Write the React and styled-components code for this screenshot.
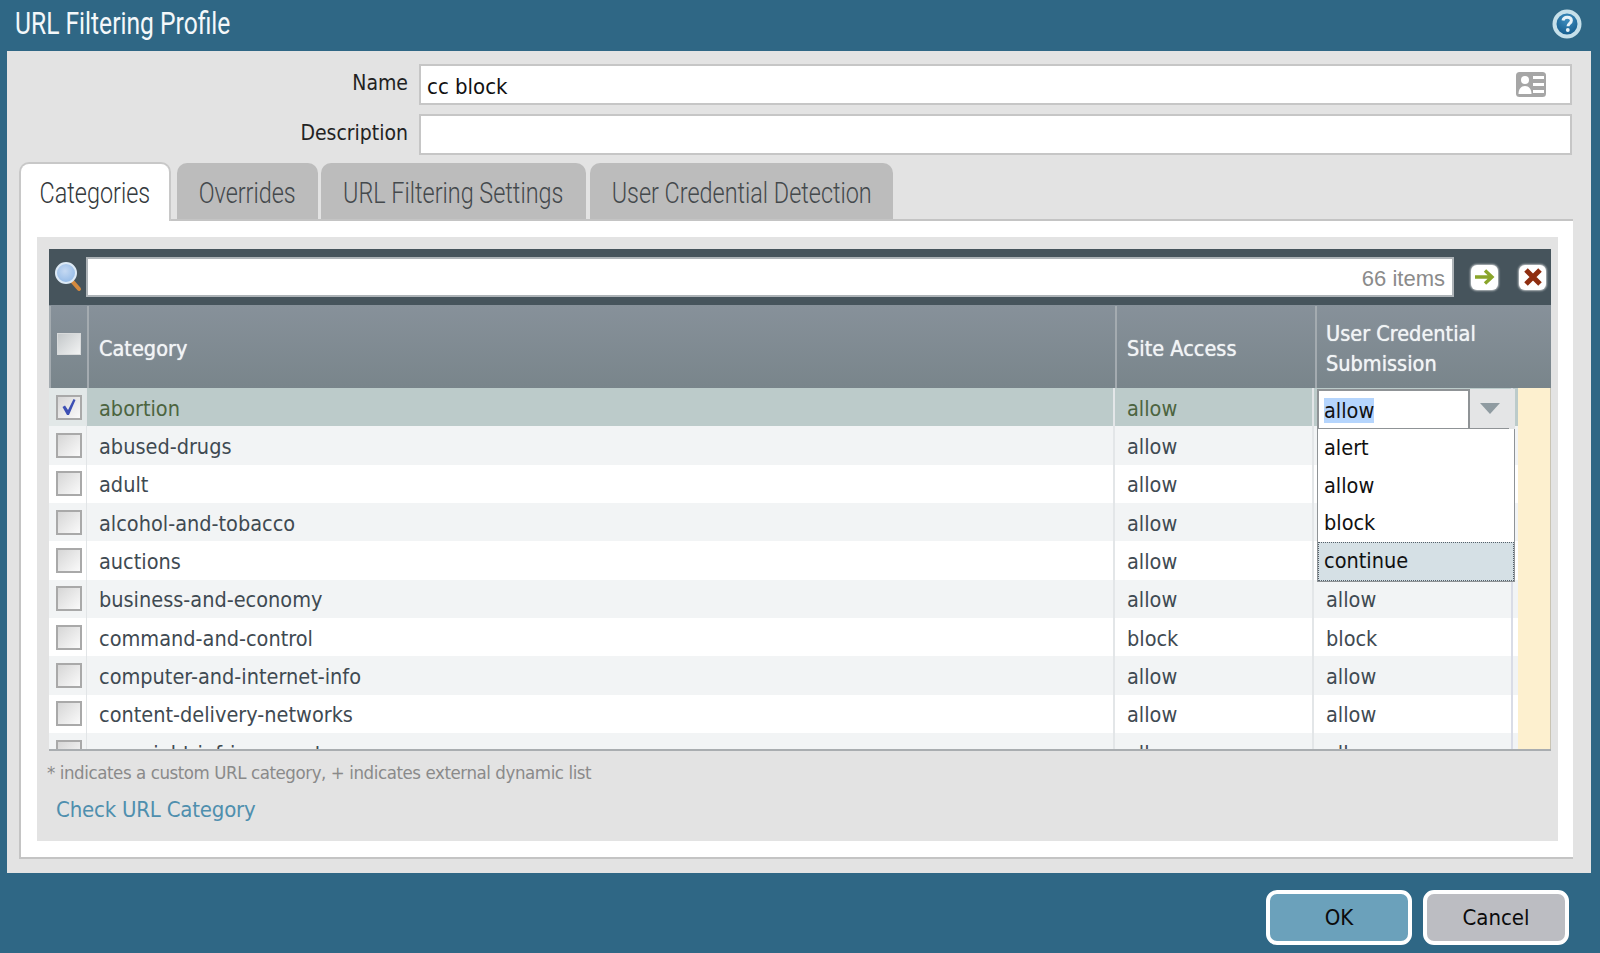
import React from "react";
import styled, { createGlobalStyle } from "styled-components";

const rows = [
  ["abortion", "allow", "allow"],
  ["abused-drugs", "allow", "allow"],
  ["adult", "allow", "allow"],
  ["alcohol-and-tobacco", "allow", "allow"],
  ["auctions", "allow", "allow"],
  ["business-and-economy", "allow", "allow"],
  ["command-and-control", "block", "block"],
  ["computer-and-internet-info", "allow", "allow"],
  ["content-delivery-networks", "allow", "allow"],
  ["copyright-infringement", "allow", "allow"],
];

const tabs = [
  { label: "Categories", width: 152, gap: 6 },
  { label: "Overrides", width: 141, gap: 3 },
  { label: "URL Filtering Settings", width: 265, gap: 4 },
  { label: "User Credential Detection", width: 303, gap: 0 },
];

function HelpIcon() {
  return (
    <svg width="32" height="32" viewBox="0 0 32 32">
      <defs>
        <radialGradient id="helpFill" cx="50%" cy="30%" r="70%">
          <stop offset="0%" stopColor="#3f8fc0" />
          <stop offset="100%" stopColor="#12598a" />
        </radialGradient>
      </defs>
      <circle cx="16" cy="16" r="12.500" fill="url(#helpFill)" stroke="#c6e0ea" strokeWidth="4" />
      <path d="M12 12.500c.4-2.300 2-3.300 4.200-3.300 2.500 0 4.200 1.300 4.200 3.300 0 2.800-3.400 3-3.400 5.700" fill="none" stroke="#e8f3f8" strokeWidth="3" />
      <circle cx="16.800" cy="22" r="1.900" fill="#e8f3f8" />
    </svg>
  );
}

function CardIcon() {
  return (
    <svg width="32" height="27" viewBox="0 0 32 27">
      <rect x="1" y="1" width="30" height="25" rx="3.500" fill="#a6a6a6" />
      <circle cx="10" cy="9" r="4" fill="#fff" />
      <path d="M3.500 23c0-5 2.500-8 6.500-8s6.500 3 6.500 8z" fill="#fff" />
      <path d="M18 5h11v3H18zM18 12h11v3H18zM18 19h11v3H18z" fill="#fff" />
    </svg>
  );
}

function SearchIcon() {
  return (
    <svg width="30" height="32" viewBox="0 0 30 32">
      <defs>
        <radialGradient id="lensFill" cx="45%" cy="40%" r="65%">
          <stop offset="0%" stopColor="#c5d9f2" />
          <stop offset="100%" stopColor="#90b8e6" />
        </radialGradient>
      </defs>
      <path d="M19 20l7 8" stroke="#d68a3d" strokeWidth="4" strokeLinecap="round" />
      <circle cx="13" cy="12" r="10" fill="url(#lensFill)" stroke="#dce9f5" strokeWidth="2" />
    </svg>
  );
}

function ArrowIcon() {
  return (
    <svg width="22" height="18" viewBox="0 0 22 18">
      <path d="M1 9h16M11 2.500L18 9l-7 6.500" fill="none" stroke="#8aa52a" strokeWidth="3.400" />
    </svg>
  );
}

function CloseIcon() {
  return (
    <svg width="20" height="20" viewBox="0 0 20 20">
      <path d="M3 3l14 14M17 3L3 17" fill="none" stroke="#8f2e10" strokeWidth="5" />
    </svg>
  );
}

function Check() {
  return (
    <svg width="20" height="20" viewBox="0 0 20 20">
      <path d="M3.500 10l2.500-1.500 3 4.500L14.500 2l2 1-6.500 15H8z" fill="#3d50b4" />
    </svg>
  );
}

function App() {
  return (
    <Page>
      <GlobalStyle />
      <TitleBar>
        <Title>
          <TitleText>URL Filtering Profile</TitleText>
        </Title>
        <HelpIcon />
      </TitleBar>
      <Panel>
        <FormBlock>
          <FormRow>
            <FormLabel>Name</FormLabel>
            <TextBox>
              cc block
              <CardIcon />
            </TextBox>
          </FormRow>
          <FormRow>
            <FormLabel>Description</FormLabel>
            <TextBox />
          </FormRow>
        </FormBlock>
        <Tabs>
          {tabs.map((t, i) => (
            <Tab key={t.label} $active={i === 0} $width={t.width} $gap={t.gap}>
              <TabText>{t.label}</TabText>
            </Tab>
          ))}
        </Tabs>
        <TabBody>
          <Inner>
            <Grid>
              <Toolbar>
                <SearchSlot>
                  <SearchIcon />
                </SearchSlot>
                <FilterBox>66 items</FilterBox>
                <ToolButton $right={21}>
                  <ArrowIcon />
                </ToolButton>
                <ToolButton>
                  <CloseIcon />
                </ToolButton>
              </Toolbar>
              <HeadRow>
                <HeadCheck>
                  <HeadBox />
                </HeadCheck>
                <HeadCell>Category</HeadCell>
                <HeadCell>Site Access</HeadCell>
                <HeadCell>
                  User Credential
                  <br />
                  Submission
                </HeadCell>
              </HeadRow>
              <Body>
                <RowList>
                  {rows.map((r, i) => (
                    <Row key={r[0]} $selected={i === 0} $odd={i % 2 === 1}>
                      <CheckCell $selected={i === 0}>
                        <Box>{i === 0 && <Check />}</Box>
                      </CheckCell>
                      <Cell>{r[0]}</Cell>
                      <Cell>{r[1]}</Cell>
                      <LastCell>{i > 4 && r[2]}</LastCell>
                    </Row>
                  ))}
                  <Combo>
                    <ComboTop>
                      <ComboInput>
                        <Selected>allow</Selected>
                      </ComboInput>
                      <ComboArrow>
                        <ArrowDown />
                      </ComboArrow>
                    </ComboTop>
                    <ComboList>
                      <ComboItem>alert</ComboItem>
                      <ComboItem>allow</ComboItem>
                      <ComboItem>block</ComboItem>
                      <ComboItem $active>continue</ComboItem>
                    </ComboList>
                  </Combo>
                </RowList>
                <Filler />
              </Body>
            </Grid>
            <Note>* indicates a custom URL category, + indicates external dynamic list</Note>
            <CheckLink>Check URL Category</CheckLink>
          </Inner>
        </TabBody>
      </Panel>
      <Footer>
        <FootButton $primary>OK</FootButton>
        <FootButton>Cancel</FootButton>
      </Footer>
    </Page>
  );
}

const body = `"DejaVu Sans Condensed", "DejaVu Sans", sans-serif`;
const light = `Roboto, "Liberation Sans", sans-serif`;

const GlobalStyle = createGlobalStyle`
  html, body {
    margin: 0;
    padding: 0;
    background: #2f6785;
  }
  * {
    box-sizing: border-box;
  }
`;

const Page = styled.div`
  width: 1600px;
  height: 953px;
  display: flex;
  flex-direction: column;
  overflow: hidden;
  background: #2f6785;
  font-family: ${body};
`;

const TitleBar = styled.div`
  height: 51px;
  flex: none;
  display: flex;
  align-items: center;
  justify-content: space-between;
  padding: 0 17px 4px 15px;
`;

const Title = styled.div`
  font-family: ${light};
  font-weight: 400;
  font-size: 31px;
  color: #f4f8fa;
`;

const TitleText = styled.span`
  display: inline-block;
  white-space: nowrap;
  transform: scaleX(0.794);
  transform-origin: left center;
`;

const Panel = styled.div`
  flex: none;
  height: 822px;
  margin: 0 9px 0 7px;
  padding-top: 13px;
  background: #e3e3e3;
`;

const FormBlock = styled.div`
  display: flex;
  flex-direction: column;
  gap: 9px;
  margin-bottom: 7px;
`;

const FormRow = styled.div`
  display: grid;
  grid-template-columns: 401px 1153px;
  column-gap: 11px;
  align-items: center;
  height: 41px;
`;

const FormLabel = styled.div`
  text-align: right;
  font-size: 21px;
  color: #222;
  padding-bottom: 3px;
`;

const TextBox = styled.div`
  height: 41px;
  background: #fff;
  border: 2px solid #c6c6c6;
  display: flex;
  align-items: center;
  justify-content: space-between;
  padding: 4px 23px 0 6px;
  font-size: 22px;
  color: #111;
  svg {
    margin-top: -4px;
  }
`;

const Tabs = styled.div`
  display: flex;
  align-items: flex-end;
  height: 57px;
  padding-left: 12px;
`;

const Tab = styled.div`
  width: ${(p) => p.$width}px;
  height: ${(p) => (p.$active ? "59px" : "56px")};
  margin-right: ${(p) => p.$gap}px;
  display: flex;
  justify-content: center;
  padding-top: ${(p) => (p.$active ? "9px" : "10px")};
  position: relative;
  top: ${(p) => (p.$active ? "2px" : "0")};
  z-index: ${(p) => (p.$active ? 1 : 0)};
  border-radius: 10px 10px 0 0;
  font-family: ${light};
  font-weight: 300;
  font-size: 30px;
  line-height: 40px;
  color: ${(p) => (p.$active ? "#34393c" : "#44494c")};
  background: ${(p) => (p.$active ? "#fff" : "#bcbcbc")};
  border: ${(p) => (p.$active ? "2px solid #c8c8c8" : "none")};
  border-bottom: none;
`;

const TabText = styled.span`
  flex: none;
  white-space: nowrap;
  transform: scaleX(0.78);
`;

const TabBody = styled.div`
  width: 1554px;
  height: 640px;
  margin-left: 12px;
  padding: 16px 15px 0 16px;
  background: #fff;
  border: 2px solid #c4c4c4;
  border-right: none;
`;

const Inner = styled.div`
  height: 604px;
  padding: 12px 7px 0 12px;
  background: #e3e3e3;
`;

const Grid = styled.div`
  height: 502px;
  display: flex;
  flex-direction: column;
  border-bottom: 2px solid #a9adb0;
`;

const Toolbar = styled.div`
  height: 56px;
  flex: none;
  display: flex;
  align-items: center;
  background: #46545c;
  padding: 0 6px 0 0;
`;

const SearchSlot = styled.div`
  width: 37px;
  flex: none;
  display: flex;
  justify-content: center;
  padding-left: 1px;
  svg {
    display: block;
  }
`;

const FilterBox = styled.div`
  width: 1368px;
  height: 40px;
  flex: none;
  background: #fff;
  border: 2px solid #aeb4b8;
  text-align: right;
  padding-right: 7px;
  font-family: "Liberation Sans", Arial, sans-serif;
  font-size: 22px;
  line-height: 40px;
  color: #8b8b8b;
  margin-right: 17px;
`;

const ToolButton = styled.div`
  width: 27px;
  height: 25px;
  flex: none;
  display: flex;
  align-items: center;
  justify-content: center;
  background: #fff;
  border-radius: 6px;
  box-shadow: 0 0 2px 1px rgba(255, 255, 255, 0.6);
  margin-right: ${(p) => p.$right || 0}px;
`;

const HeadRow = styled.div`
  height: 83px;
  flex: none;
  display: grid;
  grid-template-columns: 40px 1028px 200px 1fr;
  padding-top: 1px;
  background: linear-gradient(#87919a, #79858b);
`;

const HeadCheck = styled.div`
  display: flex;
  justify-content: center;
  padding-top: 27px;
  border-left: 2px solid #a4abb0;
  border-right: 2px solid #a4abb0;
`;

const HeadBox = styled.div`
  width: 24px;
  height: 22px;
  background: linear-gradient(135deg, #c4c8ca, #f2f3f3);
  border: 1px solid #d8dadb;
`;

const HeadCell = styled.div`
  display: flex;
  align-items: center;
  padding-left: 10px;
  padding-top: 3px;
  border-right: 2px solid #a4abb0;
  font-size: 21.5px;
  line-height: 30px;
  color: #f1f4f5;
  text-shadow: 0 0 1px #f1f4f5;
  &:last-child {
    padding-left: 9px;
    border-right: none;
  }
`;

const Body = styled.div`
  flex: 1;
  min-height: 0;
  display: flex;
  overflow: hidden;
`;

const RowList = styled.div`
  width: 1469px;
  flex: none;
  position: relative;
`;

const Filler = styled.div`
  flex: 1;
  background: #fdf0cf;
  border-right: 1px solid #c9c4b4;
`;

const Row = styled.div`
  height: 38.35px;
  display: grid;
  grid-template-columns: 38px 1028px 199px 1fr;
  font-size: 21.5px;
  color: ${(p) => (p.$selected ? "#4c6440" : "#3f4a52")};
  background: ${(p) => (p.$selected ? "#bccbca" : p.$odd ? "#f2f4f5" : "#fff")};
`;

const CheckCell = styled.div`
  display: flex;
  align-items: center;
  justify-content: center;
  background: ${(p) => (p.$selected ? "#e2e8e8" : "transparent")};
  border-right: 1px solid #e2e5e7;
`;

const Box = styled.div`
  width: 26px;
  height: 25px;
  display: flex;
  align-items: center;
  justify-content: center;
  margin-left: 3px;
  border: 2px solid #a9a9a9;
  background: linear-gradient(135deg, #d6d6d6, #fafafa);
`;

const Cell = styled.div`
  display: flex;
  align-items: center;
  padding-left: 12px;
  padding-top: 2px;
  border-right: 2px solid #e3e6e8;
  white-space: nowrap;
`;

const LastCell = styled(Cell)`
  border-right: 2px solid #d9dce6;
  margin-right: 5px;
`;

const Combo = styled.div`
  position: absolute;
  top: 1px;
  left: 1268px;
  width: 198px;
`;

const ComboTop = styled.div`
  height: 40px;
  display: flex;
  background: #e4e5e6;
`;

const ComboInput = styled.div`
  width: 153px;
  flex: none;
  display: flex;
  align-items: center;
  padding-left: 5px;
  padding-top: 2px;
  background: #fff;
  border: 2px solid #8f9396;
  border-bottom-width: 1px;
  font-size: 21.5px;
  color: #111;
`;

const Selected = styled.span`
  background: #b5d5fd;
  line-height: 25px;
`;

const ComboArrow = styled.div`
  width: 39px;
  flex: none;
  display: flex;
  align-items: center;
  justify-content: center;
  border-bottom: 1px solid #8f9396;
`;

const ArrowDown = styled.div`
  width: 0;
  height: 0;
  border-left: 10px solid transparent;
  border-right: 10px solid transparent;
  border-top: 11px solid #8f9ba1;
`;

const ComboList = styled.div`
  background: #fff;
  border: 1px solid #8f9396;
  border-top: none;
`;

const ComboItem = styled.div`
  height: ${(p) => (p.$active ? "39px" : "37.5px")};
  display: flex;
  align-items: center;
  padding-left: 6px;
  padding-bottom: ${(p) => (p.$active ? "1.5px" : "0")};
  font-size: 21.5px;
  color: #111;
  background: ${(p) => (p.$active ? "#d5e0e5" : "#fff")};
  outline: ${(p) => (p.$active ? "1px dotted #55606a" : "none")};
  outline-offset: -1px;
`;

const Note = styled.div`
  margin-top: 11px;
  margin-left: -2px;
  font-size: 18.5px;
  letter-spacing: -0.42px;
  line-height: 22px;
  color: #8a8a8a;
`;

const CheckLink = styled.div`
  margin-top: 12px;
  margin-left: 7px;
  font-size: 22px;
  letter-spacing: -0.2px;
  line-height: 28px;
  color: #4f8fae;
`;

const Footer = styled.div`
  flex: 1;
  display: flex;
  justify-content: flex-end;
  gap: 11px;
  padding: 17px 31px 0 0;
`;

const FootButton = styled.div`
  width: 146px;
  height: 55px;
  display: flex;
  align-items: center;
  justify-content: center;
  border: 4px solid #fff;
  border-radius: 11px;
  font-size: 22px;
  color: #0b0b0b;
  background: ${(p) => (p.$primary ? "#6ba1bb" : "#bcbdc2")};
`;

export default App;
